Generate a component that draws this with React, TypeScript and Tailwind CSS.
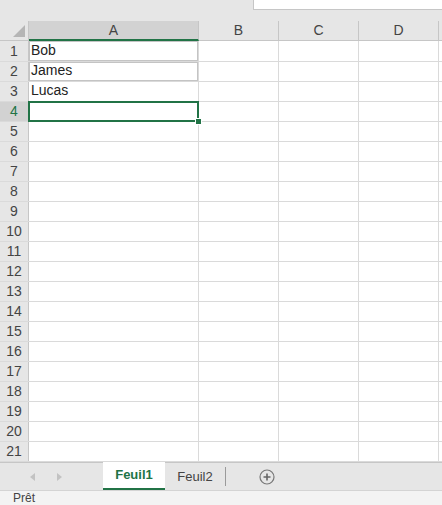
import React from "react"

const font = { fontFamily: '"Liberation Sans", Arial, sans-serif' }

const rows = ["Bob", "James", "Lucas", ""].concat(Array(17).fill(""))

function Cell({ children, className = "" }: { children?: React.ReactNode; className?: string }) {
  return <div className={`h-full border-r border-[#dadada] ${className}`}>{children}</div>
}

export default function App() {
  return (
    <div className="w-[442px] h-[505px] overflow-hidden bg-white flex flex-col text-[#222]" style={font}>
      {/* top band */}
      <div className="h-[21px] bg-[#e6e6e6] flex justify-end shrink-0">
        <div className="w-[189px] h-[10px] bg-white border-l border-b border-[#c6c6c6]" />
      </div>

      {/* column headers */}
      <div className="h-[20px] flex shrink-0 bg-[#e6e6e6] text-[14px] text-[#444]">
        <div className="w-[29px] h-full border-r border-b border-[#c6c6c6] flex items-end justify-end pr-[3px] pb-[3px]">
          <svg width="12" height="12" viewBox="0 0 12 12">
            <polygon points="12,0 12,12 0,12" fill="#b5b5b5" />
          </svg>
        </div>
        <div className="w-[170px] h-full bg-[#d2d2d2] border-r border-[#c6c6c6] border-b-2 border-b-[#217346] flex items-center justify-center">
          A
        </div>
        <div className="w-[80px] h-full border-r border-b border-[#c6c6c6] flex items-center justify-center">B</div>
        <div className="w-[80px] h-full border-r border-b border-[#c6c6c6] flex items-center justify-center">C</div>
        <div className="w-[80px] h-full border-r border-b border-[#c6c6c6] flex items-center justify-center">D</div>
        <div className="flex-1 h-full border-b border-[#c6c6c6]" />
      </div>

      {/* grid */}
      <div className="flex flex-col shrink-0">
        {rows.map((v, i) => {
          const selected = i === 3
          const boxed = i === 0 || i === 1
          return (
            <div key={i} className={`${i === 0 ? "h-[21px]" : "h-[20px]"} flex border-b border-[#dadada]`}>
              <div
                className={`w-[29px] h-full border-r flex items-center justify-center text-[14px] ${
                  selected ? "bg-[#d2d2d2] border-[#217346] text-[#217346]" : "bg-[#e6e6e6] border-[#c6c6c6] text-[#444]"
                }`}
              >
                {i + 1}
              </div>
              <Cell
                className={`w-[170px] relative flex items-end pl-[2px] text-[14px] ${
                  boxed ? "shadow-[inset_0_0_0_1px_#c4c4c4] border-[#c4c4c4]" : ""
                }`}
              >
                {v}
                {selected && (
                  <>
                    <div className="absolute z-10 -left-[1px] -top-[1px] -right-[1px] -bottom-[1px] border-2 border-[#217346]" />
                    <div className="absolute z-20 -right-[4px] -bottom-[4px] w-[7px] h-[7px] bg-[#217346] border border-white" />
                  </>
                )}
              </Cell>
              <Cell className="w-[80px]" />
              <Cell className="w-[80px]" />
              <Cell className="w-[80px]" />
              <div className="flex-1" />
            </div>
          )
        })}
      </div>

      {/* sheet tabs */}
      <div className="h-[28px] bg-[#e6e6e6] border-t border-[#c6c6c6] flex items-stretch shrink-0">
        <div className="w-[103px] flex items-center gap-[22px] pl-[30px]">
          <svg width="5" height="8" viewBox="0 0 5 8">
            <polygon points="5,0 5,8 0,4" fill="#c2c2c2" />
          </svg>
          <svg width="5" height="8" viewBox="0 0 5 8">
            <polygon points="0,0 0,8 5,4" fill="#c2c2c2" />
          </svg>
        </div>
        <div className="w-[62px] bg-white border-b-2 border-[#217346] -mt-[1px] flex items-center justify-center text-[13px] font-bold text-[#217346]">
          Feuil1
        </div>
        <div className="w-[60px] flex items-center justify-center text-[13px] text-[#444]">Feuil2</div>
        <div className="w-px my-[4px] bg-[#9a9a9a]" />
        <div className="w-[82px] flex items-center justify-center">
          <svg width="16" height="16" viewBox="0 0 16 16">
            <circle cx="8" cy="8" r="7" fill="none" stroke="#777" strokeWidth="1.2" />
            <path d="M8 4.5v7M4.5 8h7" stroke="#666" strokeWidth="1.6" />
          </svg>
        </div>
        <div className="flex-1" />
      </div>

      {/* status bar */}
      <div className="flex-1 bg-[#f3f3f3] border-t border-[#d4d4d4] pl-[13px] pt-[1px] text-[12px] text-[#444] leading-none">
        Prêt
      </div>
    </div>
  )
}
